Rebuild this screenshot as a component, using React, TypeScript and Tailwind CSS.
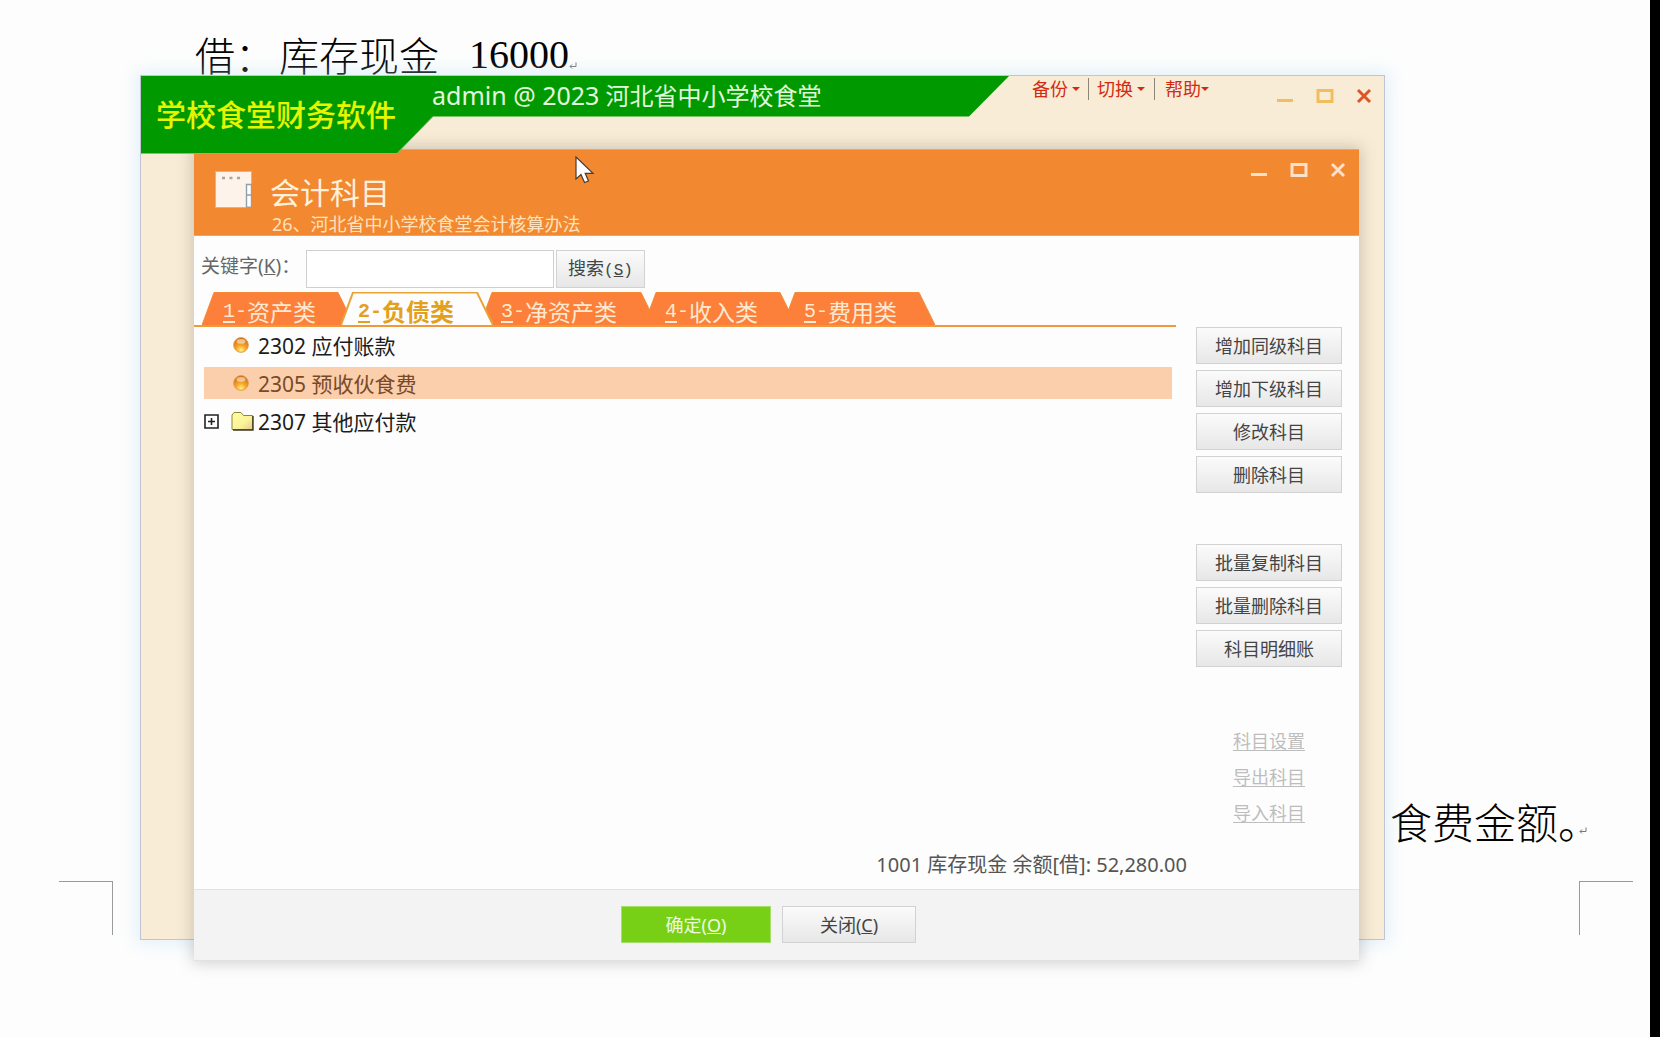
import React from "react";

const UI = "font-['Noto_Sans','Noto_Sans_CJK_SC',sans-serif]";

const tabs = [
  { key: "1", label: "资产类", width: "w-[152px]" },
  { key: "2", label: "负债类", width: "w-[152px]" },
  { key: "3", label: "净资产类", width: "w-[177px]" },
  { key: "4", label: "收入类", width: "w-[152px]" },
  { key: "5", label: "费用类", width: "w-[152px]" },
];

const accounts = [
  { code: "2302", name: "应付账款", folder: false },
  { code: "2305", name: "预收伙食费", folder: false },
  { code: "2307", name: "其他应付款", folder: true },
];

const editActions = ["增加同级科目", "增加下级科目", "修改科目", "删除科目"];
const batchActions = ["批量复制科目", "批量删除科目", "科目明细账"];
const links = ["科目设置", "导出科目", "导入科目"];

function ReturnMark() {
  return (
    <svg className="h-2 w-2" viewBox="0 0 8 8" fill="none" stroke="#777" aria-hidden="true">
      <path d="M7 0.5V4.5H1M3 2.5L1 4.5L3 6.5" />
    </svg>
  );
}

function WindowControls({ tone, closeTone }: { tone: string; closeTone: string }) {
  return (
    <div className="flex items-center gap-[22px]">
      <button aria-label="最小化" className={tone}>
        <svg className="h-4 w-[18px]" viewBox="0 0 18 16" aria-hidden="true">
          <path d="M1 12.5H17" stroke="currentColor" strokeWidth="3" />
        </svg>
      </button>
      <button aria-label="最大化" className={tone}>
        <svg className="h-4 w-[18px]" viewBox="0 0 18 16" aria-hidden="true">
          <path d="M2 2.5H16V13.5H2Z" stroke="currentColor" strokeWidth="3" fill="none" />
        </svg>
      </button>
      <button aria-label="关闭" className={closeTone}>
        <svg className="h-4 w-4" viewBox="0 0 16 16" aria-hidden="true">
          <path d="M2 2L14 14M14 2L2 14" stroke="currentColor" strokeWidth="3" />
        </svg>
      </button>
    </div>
  );
}

function MenuButton({ label, gap }: { label: string; gap: string }) {
  return (
    <button className={`flex items-center text-lg leading-6 text-[#d42a12] ${gap}`}>
      {label}
      <svg className="h-1 w-2" viewBox="0 0 8 4" aria-hidden="true">
        <path d="M0 0H8L4 4Z" fill="currentColor" />
      </svg>
    </button>
  );
}

function GrayButton({ children, className }: { children: React.ReactNode; className: string }) {
  return (
    <button
      className={`border border-[#d2d2d2] bg-gradient-to-b from-[#fbfbfb] to-[#e6e7e6] text-lg leading-6 text-[#444] ${className}`}
    >
      {children}
    </button>
  );
}

function Ball({ id }: { id: string }) {
  return (
    <svg className="h-4 w-4" viewBox="0 0 16 16" aria-hidden="true">
      <defs>
        <radialGradient id={id} cx="0.5" cy="0.85" r="0.85">
          <stop offset="0" stopColor="#fff27a" />
          <stop offset="0.4" stopColor="#f8a52c" />
          <stop offset="1" stopColor="#cf660c" />
        </radialGradient>
      </defs>
      <circle cx="8" cy="8" r="7.4" fill={`url(#${id})`} stroke="#d99a50" strokeWidth="0.8" />
      <ellipse cx="8" cy="4.4" rx="4.4" ry="2.4" fill="#fff" opacity="0.5" />
    </svg>
  );
}

function Folder() {
  return (
    <svg className="h-5 w-[23px]" viewBox="0 0 23 20" aria-hidden="true">
      <defs>
        <linearGradient id="folder" x1="0" y1="0" x2="1" y2="1">
          <stop offset="0" stopColor="#ffff9a" />
          <stop offset="0.6" stopColor="#fbf39a" />
          <stop offset="1" stopColor="#e8c890" />
        </linearGradient>
      </defs>
      <path d="M1 18.5V4L3 1.5H10L12.5 4.5H21.5V18.5Z" fill="url(#folder)" stroke="#8a8640" />
      <path d="M2 19H22V5" fill="none" stroke="#3c3a20" strokeWidth="1.4" />
    </svg>
  );
}

function Tab({ item, active }: { item: (typeof tabs)[number]; active: boolean }) {
  const w = Number(item.width.replace(/\D/g, ""));
  return (
    <button
      role="tab"
      aria-selected={active}
      className={`relative -mr-[13px] flex h-[33px] items-center pt-[6px] ${item.width} ${
        active ? "z-10 pl-[17px] text-2xl font-bold text-[#e3a01c]" : "pl-[21px] text-[23px] text-[#ffe9d2]"
      }`}
    >
      <svg
        className="absolute inset-0 h-full w-full"
        viewBox={`0 0 ${w} 34`}
        preserveAspectRatio="none"
        aria-hidden="true"
      >
        <path d={`M0 34L12 0.5H${w - 16}L${w} 34Z`} fill={active ? "#fdfdfd" : "#fc7f3a"} />
        <path
          d={`M0 34L12 0.5H${w - 16}L${w} 34`}
          fill="none"
          stroke={active ? "#e9a437" : "#f58a34"}
          strokeWidth={active ? 2 : 1}
        />
      </svg>
      <span className="relative flex items-center leading-7">
        <span className="font-['Liberation_Mono',monospace] text-xl leading-7">
          <u className="underline-offset-4">{item.key}</u>-
        </span>
        <span>{item.label}</span>
      </span>
    </button>
  );
}

function AccountRow({ item, selected }: { item: (typeof accounts)[number]; selected: boolean }) {
  return (
    <li
      role="treeitem"
      aria-selected={selected}
      className={`flex h-8 items-center text-[21px] leading-8 ${
        selected ? "bg-[#fbcfac] text-[#7a4a28]" : "text-[#1c1c1c]"
      }`}
    >
      {item.folder ? (
        <>
          <button aria-label="展开" className="w-[27px]">
            <svg className="h-[15px] w-[15px]" viewBox="0 0 15 15" aria-hidden="true">
              <path d="M1 1H14V14H1Z" fill="#fff" stroke="#222" strokeWidth="1.6" />
              <path d="M4 7.5H11M7.5 4V11" stroke="#222" strokeWidth="1.6" />
            </svg>
          </button>
          <Folder />
          <span className="pl-1 pt-[2px]">
            {item.code} {item.name}
          </span>
        </>
      ) : (
        <>
          <span className="pl-[29px]">
            <Ball id={`ball${item.code}`} />
          </span>
          <span className="pl-[9px] pt-[2px]">
            {item.code} {item.name}
          </span>
        </>
      )}
    </li>
  );
}

function AccountDialog() {
  return (
    <section
      aria-label="会计科目"
      className="ml-[53px] mr-[25px] -mb-[22px] bg-[#fdfdfd] shadow-[0_0_14px_2px_rgba(90,90,90,0.28)]"
    >
      <header className="flex h-[87px] items-start justify-between border-y border-[#f3a840] bg-[#f28830] pl-[21px] pr-[13px]">
        <div className="flex">
          <svg className="mt-[21px] h-[37px] w-[37px]" viewBox="0 0 37 37" aria-hidden="true">
            <path d="M0.5 0.5H36.5V36.5H0.5Z" fill="#fdf3ea" stroke="#c9b6a8" />
            <path d="M31.5 36V13.5H36.5V36.5ZM31.5 24H36" fill="#fff" stroke="#8fa0ad" strokeWidth="1.4" />
            <path d="M7 7h3M14.5 7h3M22 7h3" stroke="#a9a4a0" strokeWidth="2.6" />
          </svg>
          <div className="pl-[18px] pt-[25px]">
            <h2 className="text-[30px] leading-9 text-[#fff0dc]">会计科目</h2>
            <p className="pl-[2px] pt-px text-lg leading-6 text-[#ffe2bc]">26、河北省中小学校食堂会计核算办法</p>
          </div>
        </div>
        <div className="pt-3">
          <WindowControls tone="text-[#fbe0cc]" closeTone="text-[#fbe0cc]" />
        </div>
      </header>

      <form className="flex h-[56px] items-center pl-[7px] pt-[10px]" onSubmit={(e) => e.preventDefault()}>
        <label htmlFor="keyword" className="w-[105px] pb-[6px] text-[19px] leading-7 text-[#666]">
          关键字(<u>K</u>)：
        </label>
        <input
          id="keyword"
          className="h-[38px] w-[248px] border border-[#cfcfcf] bg-white px-2 text-lg outline-none"
        />
        <GrayButton className="ml-[2px] h-[38px] w-[89px]">
          搜索
          <span className="font-['Liberation_Mono',monospace] text-base">
            (<u>S</u>)
          </span>
        </GrayButton>
      </form>

      <div className="flex">
        <div className="min-w-0 flex-1">
          <div role="tablist" className="flex border-b-2 border-[#f0983c] pl-2">
            {tabs.map((t) => (
              <Tab key={t.key} item={t} active={t.key === "2"} />
            ))}
          </div>
          <ul role="tree" className="flex flex-col gap-[6px] pl-[10px] pr-1 pt-[2px]">
            {accounts.map((a) => (
              <AccountRow key={a.code} item={a} selected={a.code === "2305"} />
            ))}
          </ul>
        </div>
        <div className="flex flex-col items-stretch pl-5 pr-[17px] pt-[35px]">
          <div className="flex flex-col gap-[6px]">
            {editActions.map((a) => (
              <GrayButton key={a} className="h-[37px] w-[146px]">
                {a}
              </GrayButton>
            ))}
          </div>
          <div className="flex flex-col gap-[6px] pt-[51px]">
            {batchActions.map((a) => (
              <GrayButton key={a} className="h-[37px] w-[146px]">
                {a}
              </GrayButton>
            ))}
          </div>
          <nav className="flex flex-col items-center gap-3 pt-[62px]">
            {links.map((l) => (
              <a key={l} href="#" className="text-lg leading-6 text-[#bdbdbd] underline underline-offset-2">
                {l}
              </a>
            ))}
          </nav>
        </div>
      </div>

      <p className="pb-[10px] pr-[172px] pt-[26px] text-right text-xl leading-7 text-[#555]">
        1001 库存现金 余额[借]: 52,280.00
      </p>

      <footer className="flex items-center justify-center gap-[11px] border-y border-[#e2e2e2] bg-[#f3f3f3] pb-[17px] pr-4 pt-4">
        <button className="h-[37px] w-[150px] border border-[#a5de68] bg-[#77d015] text-lg leading-6 text-[#f0fbe2]">
          确定(<u>O</u>)
        </button>
        <GrayButton className="h-[37px] w-[134px]">
          关闭(<u>C</u>)
        </GrayButton>
      </footer>
    </section>
  );
}

function MainWindow() {
  return (
    <main className="absolute left-[140px] right-[265px] top-[75px] border border-[#c2c4d6] bg-[#f9ecd6] shadow-[0_0_16px_4px_rgba(190,225,245,0.4)]">
      <div className="relative flex h-[73px] justify-between">
        <svg className="absolute left-0 top-0 h-[78px] w-[868px]" viewBox="0 0 868 78" aria-hidden="true">
          <path d="M0 0H868L828 40.5H292L256 77.5H0Z" fill="#009a00" />
          <path d="M828 40.5H292L256 77.5H0" fill="none" stroke="#7cc46c" />
        </svg>
        <div className="relative flex">
          <h1 className="w-[291px] pl-[15px] pt-[18px] text-[30px] font-medium leading-[42px] text-[#e6f500]">
            学校食堂财务软件
          </h1>
          <p className="pt-px text-2xl leading-9 text-[#e2f8dc]">
            <span className="text-[25px]">admin @ 2023</span> 河北省中小学校食堂
          </p>
        </div>
        <div className="relative flex items-start">
          <div className="flex items-center pr-[67px] pt-px">
            <MenuButton label="备份" gap="gap-1" />
            <span className="mx-2 h-[22px] w-px bg-[#8a8578]" />
            <MenuButton label="切换" gap="gap-1" />
            <span className="ml-[9px] mr-[10px] h-[22px] w-px bg-[#8a8578]" />
            <MenuButton label="帮助" gap="gap-0" />
          </div>
          <div className="pr-3 pt-3">
            <WindowControls tone="text-[#f2bd5c]" closeTone="text-[#dd5426]" />
          </div>
        </div>
      </div>
      <AccountDialog />
    </main>
  );
}

export default function App() {
  return (
    <div className={`relative min-h-screen overflow-hidden border-r-[10px] border-black bg-[#fdfdfd] ${UI}`}>
      <article className="text-black">
        <p className="flex items-center pl-[195px] pt-[23px] text-[40px] font-extralight leading-[60px]">
          <span className="w-[84px] font-['Noto_Sans_CJK_SC',sans-serif]">借：</span>
          <span className="font-['Noto_Sans_CJK_SC',sans-serif]">库存现金</span>
          <span className="pl-[30px] pt-[2px] font-['Liberation_Serif',serif] font-normal">16000</span>
          <span className="pt-6">
            <ReturnMark />
          </span>
        </p>
        <p className="flex items-center justify-end pr-[63px] pt-[706px] text-[42px] font-extralight leading-[60px]">
          <span className="-mr-[21px] font-['Noto_Sans_CJK_SC',sans-serif]">食费金额。</span>
          <span className="pt-5">
            <ReturnMark />
          </span>
        </p>
        <div className="flex justify-between pl-[59px] pr-[17px] pt-[30px]">
          <span className="h-[54px] w-[54px] border-r border-t border-[#9a9a9a]" />
          <span className="h-[54px] w-[54px] border-l border-t border-[#9a9a9a]" />
        </div>
      </article>
      <MainWindow />
      <svg className="absolute left-[575px] top-[156px] h-7 w-5" viewBox="0 0 20 28" aria-hidden="true">
        <path
          d="M1 1V23L6 18.5L9.5 26.5L13.5 25L10.2 17.3L18 17.3Z"
          fill="#fff"
          stroke="#4a3a30"
          strokeWidth="1.2"
        />
      </svg>
    </div>
  );
}
